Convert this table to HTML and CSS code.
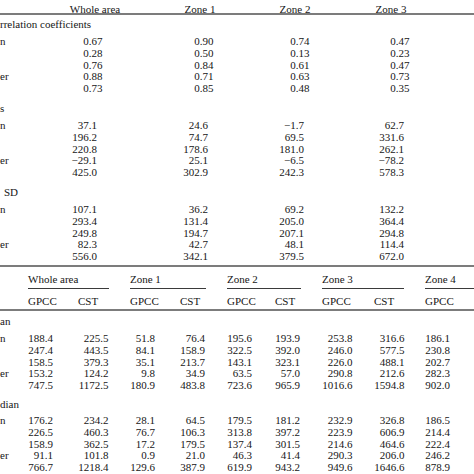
FILE: index.html
```
<!DOCTYPE html>
<html>
<head>
<meta charset="utf-8">
<link rel="stylesheet" href="styles.css">
</head>
<body>
<div class="t1">
  <div class="t1-head"><span></span><span>Whole area</span><span>Zone 1</span><span>Zone 2</span><span>Zone 3</span></div>
  <div class="sec first">rrelation coefficients</div>
  <div class="rows corr">
    <div class="r"><span>n</span><span>0.67</span><span>0.90</span><span>0.74</span><span>0.47</span></div>
    <div class="r"><span></span><span>0.28</span><span>0.50</span><span>0.13</span><span>0.23</span></div>
    <div class="r"><span></span><span>0.76</span><span>0.84</span><span>0.61</span><span>0.47</span></div>
    <div class="r"><span>er</span><span>0.88</span><span>0.71</span><span>0.63</span><span>0.73</span></div>
    <div class="r"><span></span><span>0.73</span><span>0.85</span><span>0.48</span><span>0.35</span></div>
  </div>
  <div class="sec">s</div>
  <div class="rows">
    <div class="r"><span>n</span><span>37.1</span><span>24.6</span><span>−1.7</span><span>62.7</span></div>
    <div class="r"><span></span><span>196.2</span><span>74.7</span><span>69.5</span><span>331.6</span></div>
    <div class="r"><span></span><span>220.8</span><span>178.6</span><span>181.0</span><span>262.1</span></div>
    <div class="r"><span>er</span><span>−29.1</span><span>25.1</span><span>−6.5</span><span>−78.2</span></div>
    <div class="r"><span></span><span>425.0</span><span>302.9</span><span>242.3</span><span>578.3</span></div>
  </div>
  <div class="sec sd">SD</div>
  <div class="rows">
    <div class="r"><span>n</span><span>107.1</span><span>36.2</span><span>69.2</span><span>132.2</span></div>
    <div class="r"><span></span><span>293.4</span><span>131.4</span><span>205.0</span><span>364.4</span></div>
    <div class="r"><span></span><span>249.8</span><span>194.7</span><span>207.1</span><span>294.8</span></div>
    <div class="r"><span>er</span><span>82.3</span><span>42.7</span><span>48.1</span><span>114.4</span></div>
    <div class="r"><span></span><span>556.0</span><span>342.1</span><span>379.5</span><span>672.0</span></div>
  </div>
</div>
<div class="t2">
  <div class="t2-span"><span></span><span class="g">Whole area</span><span class="g">Zone 1</span><span class="g">Zone 2</span><span class="g">Zone 3</span><span class="g last">Zone 4</span></div>
  <div class="t2-sub"><span></span><span>GPCC</span><span>CST</span><span>GPCC</span><span>CST</span><span>GPCC</span><span>CST</span><span>GPCC</span><span>CST</span><span>GPCC</span></div>
  <div class="sec2 first">an</div>
  <div class="rows2">
    <div class="q"><span>n</span><span>188.4</span><span>225.5</span><span>51.8</span><span>76.4</span><span>195.6</span><span>193.9</span><span>253.8</span><span>316.6</span><span>186.1</span></div>
    <div class="q"><span></span><span>247.4</span><span>443.5</span><span>84.1</span><span>158.9</span><span>322.5</span><span>392.0</span><span>246.0</span><span>577.5</span><span>230.8</span></div>
    <div class="q"><span></span><span>158.5</span><span>379.3</span><span>35.1</span><span>213.7</span><span>143.1</span><span>323.1</span><span>226.0</span><span>488.1</span><span>202.7</span></div>
    <div class="q"><span>er</span><span>153.2</span><span>124.2</span><span>9.8</span><span>34.9</span><span>63.5</span><span>57.0</span><span>290.8</span><span>212.6</span><span>282.3</span></div>
    <div class="q"><span></span><span>747.5</span><span>1172.5</span><span>180.9</span><span>483.8</span><span>723.6</span><span>965.9</span><span>1016.6</span><span>1594.8</span><span>902.0</span></div>
  </div>
  <div class="sec2">dian</div>
  <div class="rows2 second">
    <div class="q"><span>n</span><span>176.2</span><span>234.2</span><span>28.1</span><span>64.5</span><span>179.5</span><span>181.2</span><span>232.9</span><span>326.8</span><span>186.5</span></div>
    <div class="q"><span></span><span>226.5</span><span>460.3</span><span>76.7</span><span>106.3</span><span>313.8</span><span>397.2</span><span>223.9</span><span>606.9</span><span>214.4</span></div>
    <div class="q"><span></span><span>158.9</span><span>362.5</span><span>17.2</span><span>179.5</span><span>137.4</span><span>301.5</span><span>214.6</span><span>464.6</span><span>222.4</span></div>
    <div class="q"><span>er</span><span>91.1</span><span>101.8</span><span>0.9</span><span>21.0</span><span>46.3</span><span>41.4</span><span>290.3</span><span>206.0</span><span>246.2</span></div>
    <div class="q"><span></span><span>766.7</span><span>1218.4</span><span>129.6</span><span>387.9</span><span>619.9</span><span>943.2</span><span>949.6</span><span>1646.6</span><span>878.9</span></div>
  </div>
</div>
</body>
</html>
```
FILE: styles.css
```
html, body {
  margin: 0;
  padding: 0;
  background: #ffffff;
}
body {
  width: 474px;
  height: 474px;
  overflow: hidden;
  font-family: "Liberation Serif", "Times New Roman", serif;
  font-size: 11px;
  line-height: 12px;
  color: #161616;
}
.t1 {
  border-bottom: 2px solid #7c7c7c;
  padding-bottom: 3px;
}
.t1-head {
  display: grid;
  grid-template-columns: 50px 90px 120px 70px 122px;
  height: 10px;
  padding-top: 3px;
  border-bottom: 2px solid #7c7c7c;
}
.t1-head span {
  text-align: center;
  height: 10px;
}
.sec {
  margin-top: 8px;
  height: 12px;
  white-space: nowrap;
}
.sec.first {
  margin-top: 3px;
}
.sec.sd {
  padding-left: 4px;
}
.rows {
  margin-top: 5px;
}
.r {
  display: grid;
  grid-template-columns: 57px 40px 111px 96px 100px;
  height: 11.8px;
}
.r span {
  text-align: right;
  white-space: nowrap;
}
.r span:first-child {
  text-align: left;
}
.corr .r span:not(:first-child) {
  margin-right: -5.5px;
}
.t2-span {
  display: grid;
  grid-template-columns: 28px 102px 97px 95px 103px 1fr;
  margin-top: 6px;
}
.t2-span .g {
  border-bottom: 1px solid #3a3a3a;
  padding-bottom: 3.5px;
  margin-right: 21.5px;
  white-space: nowrap;
}
.t2-span .g.last {
  margin-right: 0;
}
.t2-sub, .q {
  display: grid;
  grid-template-columns: 28px 50px 52px 50px 47px 48px 47px 52px 51px 1fr;
}
.t2-sub {
  margin-top: 5.5px;
  padding-bottom: 2px;
  border-bottom: 2px solid #7c7c7c;
}
.sec2 {
  margin-top: 7px;
  height: 12px;
}
.sec2.first {
  margin-top: 4px;
}
.rows2 {
  margin-top: 5px;
}
.rows2.second {
  margin-top: 4px;
}
.q {
  height: 11.8px;
}
.q span {
  justify-self: start;
  width: 25px;
  text-align: right;
  white-space: nowrap;
}
.q span:first-child {
  width: auto;
  text-align: left;
}
.q span:nth-child(3),
.q span:nth-child(8),
.q span:nth-child(9) {
  width: 30.5px;
}
```
